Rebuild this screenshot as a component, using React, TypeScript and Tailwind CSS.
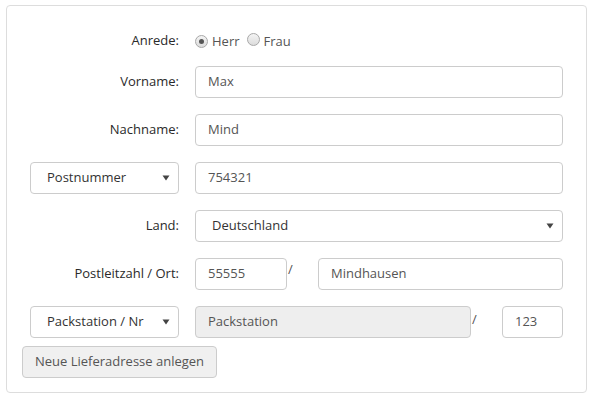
import React from 'react';

const font = { fontFamily: '"Open Sans", "Liberation Sans", sans-serif' };

function Caret() {
  return (
    <svg width="8" height="6" viewBox="0 0 8 6" className="shrink-0">
      <path d="M0.5 0.5 L7.5 0.5 L4 5.5 Z" fill="#444" />
    </svg>
  );
}

function Radio({ checked }: { checked?: boolean }) {
  return (
    <span className="inline-flex items-center justify-center w-[13px] h-[13px] rounded-full border border-[#a8a8a8] bg-gradient-to-b from-[#f4f4f4] to-[#dcdcdc]">
      {checked && <span className="w-[5px] h-[5px] rounded-full bg-[#555]" />}
    </span>
  );
}

function TextInput({ value, className = '', disabled }: { value: string; className?: string; disabled?: boolean }) {
  return (
    <div
      className={
        'h-8 flex items-center px-3 border border-[#ccc] rounded text-[13px] text-[#555] ' +
        (disabled ? 'bg-[#eee] ' : 'bg-white ') +
        className
      }
    >
      {value}
    </div>
  );
}

function Select({ value, className = '' }: { value: string; className?: string }) {
  return (
    <div
      className={
        'h-8 flex items-center justify-between pl-4 pr-[8px] border border-[#ccc] rounded bg-white text-[13px] text-[#333] ' +
        className
      }
    >
      <span>{value}</span>
      <Caret />
    </div>
  );
}

function Label({ children }: { children: React.ReactNode }) {
  return <div className="h-8 flex items-center justify-end text-[13px] text-[#2a2a2a]">{children}</div>;
}

export default function App() {
  return (
    <div className="bg-white w-[593px] h-[400px] pt-[5px] pl-[6px]" style={font}>
      <div className="w-[581px] h-[388px] border border-[#ddd] rounded pt-[19px] pl-[15px] pr-[23px]">
        <div className="ml-2 grid grid-cols-[149px_368px] gap-x-4">
          {/* Anrede */}
          <Label>Anrede:</Label>
          <div className="h-8 flex items-center text-[13px] text-[#555] pt-[1px]">
            <Radio checked />
            <span className="ml-[4px]">Herr</span>
            <span className="ml-[7px]">
              <Radio />
            </span>
            <span className="ml-[4px]">Frau</span>
          </div>

          <div className="col-span-2 h-[9px]" />

          <Label>Vorname:</Label>
          <TextInput value="Max" />

          <div className="col-span-2 h-4" />

          <Label>Nachname:</Label>
          <TextInput value="Mind" />

          <div className="col-span-2 h-4" />

          <Select value="Postnummer" />
          <TextInput value="754321" />

          <div className="col-span-2 h-4" />

          <Label>Land:</Label>
          <Select value="Deutschland" />

          <div className="col-span-2 h-4" />

          <Label>Postleitzahl / Ort:</Label>
          <div className="flex">
            <TextInput value="55555" className="w-[92px]" />
            <span className="w-[31px] text-[13px] leading-none text-[#555] pt-[5px] pl-[1px]">/</span>
            <TextInput value="Mindhausen" className="flex-1" />
          </div>

          <div className="col-span-2 h-4" />

          <Select value="Packstation / Nr" />
          <div className="flex">
            <TextInput value="Packstation" className="w-[276px]" disabled />
            <span className="w-[31px] text-[13px] leading-none text-[#555] pt-[7px] pl-[1px]">/</span>
            <TextInput value="123" className="flex-1" />
          </div>
        </div>

        <button className="mt-2 h-8 px-3 border border-[#ccc] rounded bg-[#f0f0f0] text-[13px] text-[#555] whitespace-nowrap">
          Neue Lieferadresse anlegen
        </button>
      </div>
    </div>
  );
}
